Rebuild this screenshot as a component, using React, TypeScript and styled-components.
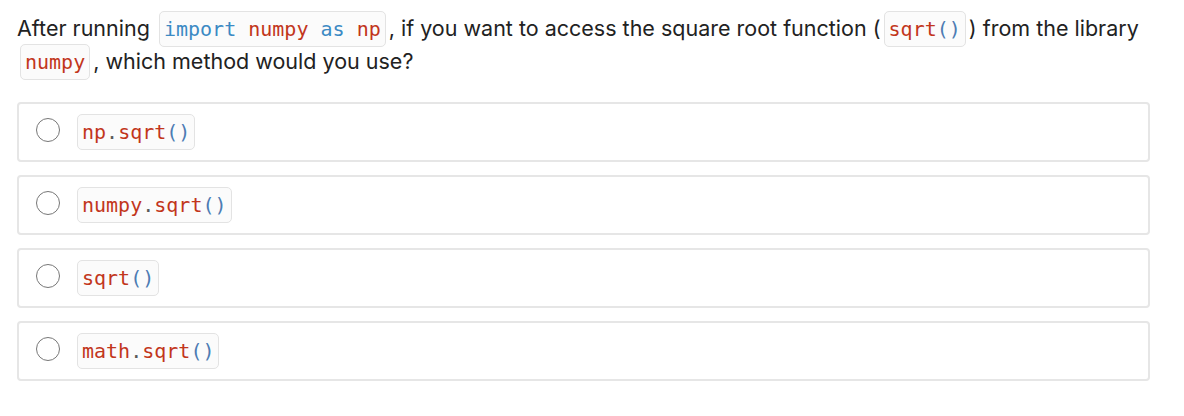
import React from "react";
import styled, { createGlobalStyle } from "styled-components";

const Global = createGlobalStyle`
  html, body { margin: 0; padding: 0; background: #ffffff; }
  body { font-family: Inter, "Noto Sans", sans-serif; color: #1f1f1f; }
`;

const Page = styled.div`
  padding: 12px 34px 0 17px;
  width: 1133px;
`;

const Question = styled.p`
  margin: 0 0 24px 0;
  font-size: 21.5px;
  line-height: 32px;
  color: #222222;
`;

const Code = styled.code<{ $inline?: boolean }>`
  font-family: "DejaVu Sans Mono", "Liberation Mono", monospace;
  font-size: 20px;
  background: #fbfbfb;
  border: 1px solid #e3e3e3;
  border-radius: 5px;
  padding: 5px 4px;
  margin: ${(p) => (p.$inline ? "0 3px" : "0")};
`;

const Tok = styled.span<{ $kind: "kw" | "id" | "punc" | "dot" }>`
  color: ${(p) =>
    p.$kind === "kw"
      ? "#3b8ac4"
      : p.$kind === "id"
      ? "#c2361c"
      : p.$kind === "dot"
      ? "#5a5a5a"
      : "#4d7cb3"};
`;

const Options = styled.div`
  display: flex;
  flex-direction: column;
  gap: 13px;
`;

const Option = styled.label`
  display: flex;
  align-items: center;
  gap: 17px;
  height: 60px;
  box-sizing: border-box;
  border: 2px solid #e6e6e6;
  border-radius: 4px;
  padding: 0 17px;
  cursor: pointer;
`;

const Radio = styled.input`
  appearance: none;
  margin: 0 0 5px 0;
  width: 24px;
  height: 24px;
  box-sizing: border-box;
  border: 1.5px solid #777777;
  border-radius: 50%;
  background: #ffffff;
  flex: none;
`;

type T = [("kw" | "id" | "punc" | "dot"), string];

const CodeTokens: React.FC<{ tokens: T[]; inline?: boolean }> = ({ tokens, inline }) => (
  <Code $inline={inline}>
    {tokens.map(([k, s], i) => (
      <Tok key={i} $kind={k}>
        {s}
      </Tok>
    ))}
  </Code>
);

const options: T[][] = [
  [["id", "np"], ["dot", "."], ["id", "sqrt"], ["punc", "()"]],
  [["id", "numpy"], ["dot", "."], ["id", "sqrt"], ["punc", "()"]],
  [["id", "sqrt"], ["punc", "()"]],
  [["id", "math"], ["dot", "."], ["id", "sqrt"], ["punc", "()"]],
];

export default function App() {
  return (
    <>
      <Global />
      <Page>
        <Question>
          After running{" "}
          <CodeTokens
            inline
            tokens={[
              ["kw", "import"],
              ["punc", " "],
              ["id", "numpy"],
              ["punc", " "],
              ["kw", "as"],
              ["punc", " "],
              ["id", "np"],
            ]}
          />
          , if you want to access the square root function (
          <CodeTokens inline tokens={[["id", "sqrt"], ["punc", "()"]]} />) from the library{" "}
          <CodeTokens inline tokens={[["id", "numpy"]]} />, which method would you use?
        </Question>
        <Options>
          {options.map((t, i) => (
            <Option key={i}>
              <Radio type="radio" name="answer" />
              <CodeTokens tokens={t} />
            </Option>
          ))}
        </Options>
      </Page>
    </>
  );
}
